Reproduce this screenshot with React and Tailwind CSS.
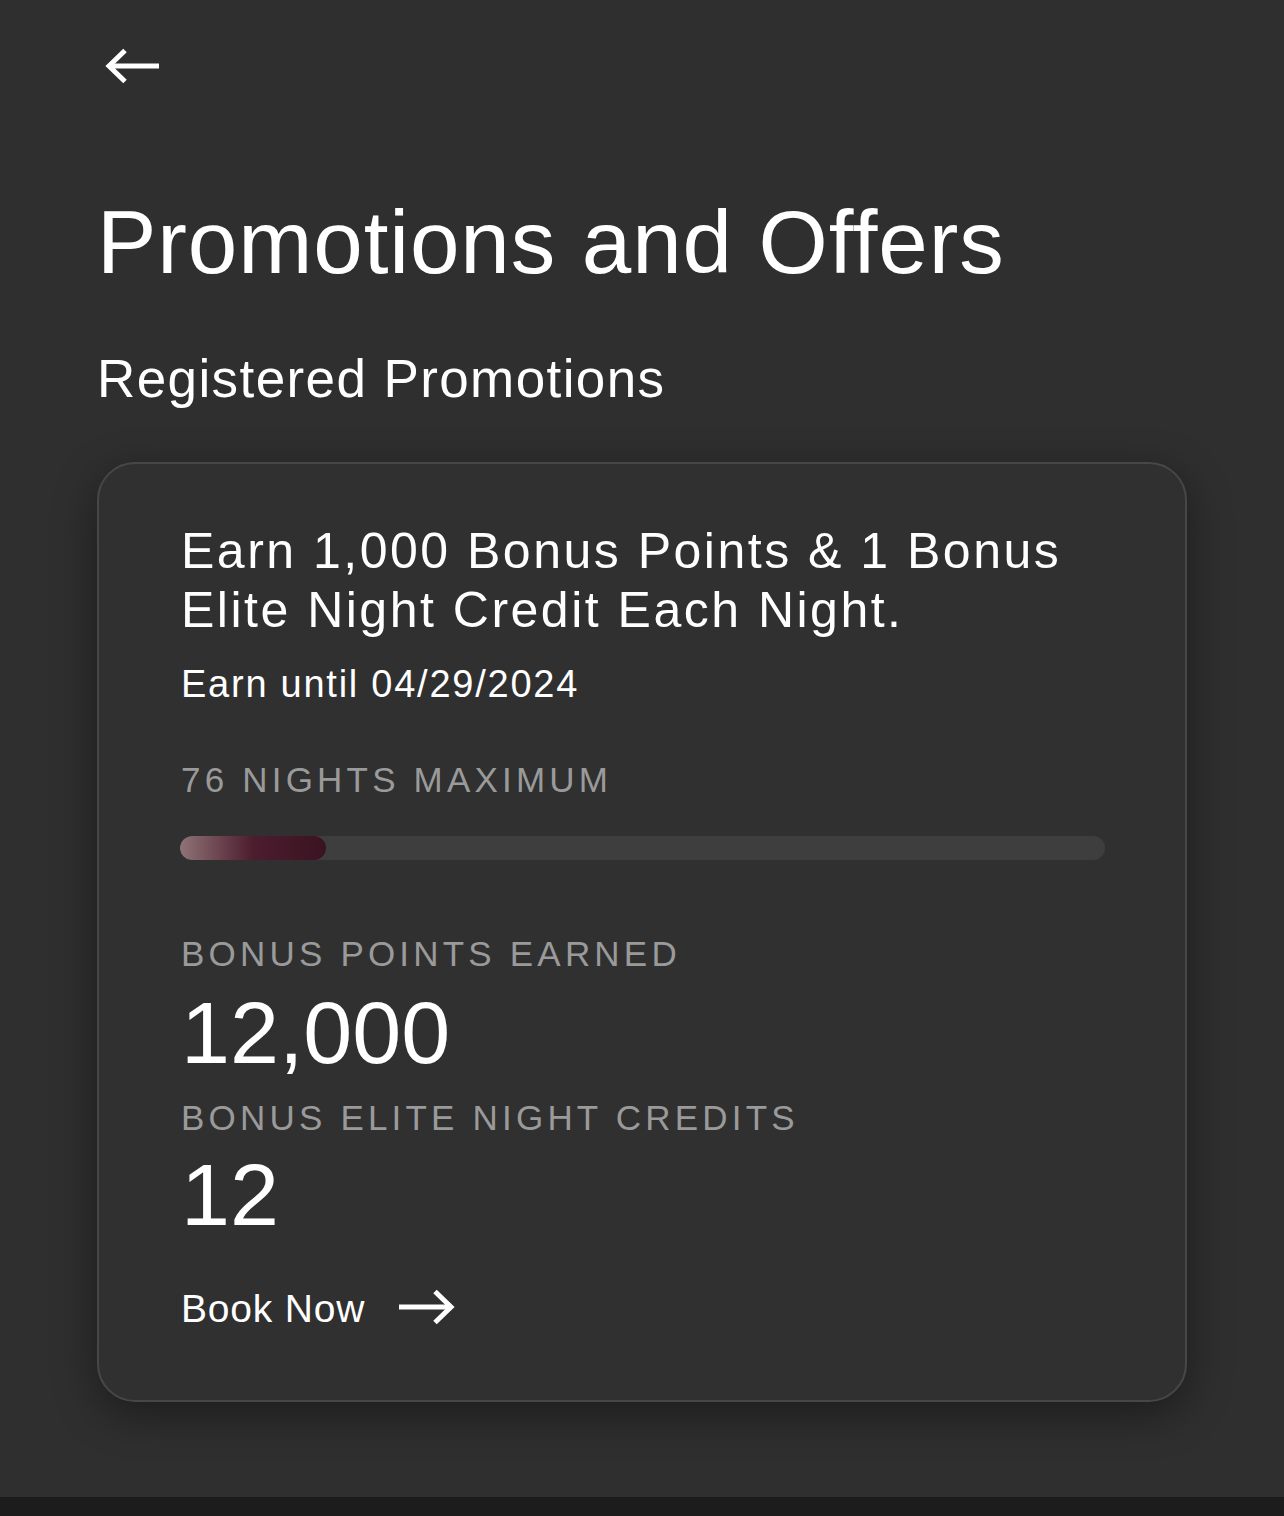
export default function App() {
  return (
    <div className="min-h-[1516px] bg-[#2f2f2f] flex flex-col font-['Liberation_Sans',Arial,sans-serif] text-white">
      <main className="flex-1 px-[97px] pt-[48px]">
        <button className="ml-[8px] block h-[36px] w-[54px]" aria-label="Back">
          <svg width="54" height="36" viewBox="0 0 54 36" fill="none" stroke="white" strokeWidth="5">
            <path d="M4 18 H54" />
            <path d="M20 2.5 L4 18 L20 33.5" />
          </svg>
        </button>
        <h1 className="mt-[114px] text-[89px] leading-[89px] tracking-[0.9px] font-normal">Promotions and Offers</h1>
        <h2 className="mt-[65px] text-[53px] leading-[53px] tracking-[1.4px] font-normal">Registered Promotions</h2>
        <section className="mt-[57px] w-[1090px] rounded-[38px] border-2 border-[#474747] bg-[#303030] shadow-[0_12px_44px_rgba(0,0,0,0.4)] pl-[82px] pr-[81px] pt-[58px] pb-[68px]">
          <h3 className="text-[50px] leading-[59px] tracking-[2.5px] font-normal">
            Earn 1,000 Bonus Points &amp; 1 Bonus Elite Night Credit Each Night.
          </h3>
          <p className="mt-[22px] text-[38px] leading-[44px] tracking-[1.75px]">Earn until 04/29/2024</p>
          <p className="mt-[54px] text-[35px] leading-[40px] tracking-[4.2px] text-[#9a9a9a] uppercase">76 Nights Maximum</p>
          <div className="mt-[36px] -ml-[1px] h-[24px] w-[925px] rounded-full bg-[#3e3e3e] overflow-hidden">
            <div className="h-full w-[146px] rounded-full bg-[linear-gradient(to_right,#8f7378,#4c1d2e_50%,#3a1321)]" />
          </div>
          <p className="mt-[74px] text-[35px] leading-[40px] tracking-[4.2px] text-[#9a9a9a] uppercase">Bonus Points Earned</p>
          <p className="mt-[15px] text-[88px] leading-[88px]">12,000</p>
          <p className="mt-[21px] text-[35px] leading-[40px] tracking-[4.2px] text-[#9a9a9a] uppercase">Bonus Elite Night Credits</p>
          <p className="mt-[13px] text-[88px] leading-[88px]">12</p>
          <a className="mt-[47px] flex items-center gap-[34px] h-[46px]">
            <span className="text-[39px] leading-[46px] tracking-[0.8px]">Book Now</span>
            <svg width="56" height="36" viewBox="0 0 56 36" fill="none" stroke="white" strokeWidth="5" className="-mt-[4px]">
              <path d="M0 18 H52" />
              <path d="M36 2.5 L52 18 L36 33.5" />
            </svg>
          </a>
        </section>
      </main>
      <div className="h-[19px] bg-[#1c1c1c]" />
    </div>
  );
}
